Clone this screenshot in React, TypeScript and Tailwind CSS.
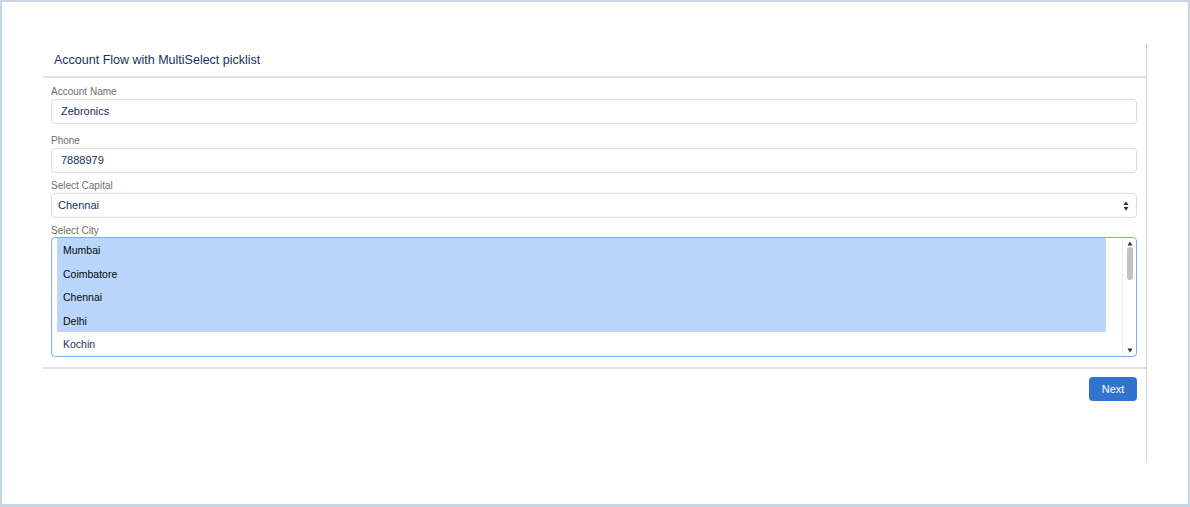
import { useState } from "react";

const cities = ["Mumbai", "Coimbatore", "Chennai", "Delhi", "Kochin"];

function Field({ label, value, className }: { label: string; value: string; className?: string }) {
  return (
    <div className={className}>
      <div className="h-[14px] text-[10px] leading-[14px] text-[#706e6b]">{label}</div>
      <div className="h-[25px] rounded-[4px] border border-[#dddbda] bg-white pl-[9px] text-[11px] leading-[23px] text-[#16325c]">
        {value}
      </div>
    </div>
  );
}

export default function App() {
  const [selected] = useState(["Mumbai", "Coimbatore", "Chennai", "Delhi"]);

  return (
    <div
      className="h-[507px] w-[1190px] overflow-hidden border-2 border-b-[3px] border-[#c8d5e4] bg-white"
      style={{ fontFamily: "'Liberation Sans', Arial, sans-serif" }}
    >
      <div className="ml-[41px] mt-[42px] flex h-[418px] w-[1104px] flex-col border-r border-[#d4d4d4]">
        {/* header */}
        <div className="h-[34px] border-b-2 border-[#e0e0e0] pl-[11px] text-[12.5px] leading-[32px] text-[#16325c]">
          Account Flow with MultiSelect picklist
        </div>

        {/* body */}
        <div className="pl-[8px] pr-[9px] pt-[7px]">
          <Field label="Account Name" value="Zebronics" />
          <Field label="Phone" value="7888979" className="mt-[10px]" />

          <div className="mt-[6px]">
            <div className="h-[14px] text-[10px] leading-[14px] text-[#706e6b]">Select Capital</div>
            <div className="flex h-[25px] items-center justify-between rounded-[4px] border border-[#dddbda] bg-white pl-[6px] pr-[6px] text-[11px] text-[#16325c]">
              <span>Chennai</span>
              <svg width="6" height="12" viewBox="0 0 6 12" className="mr-[1px]">
                <path d="M3 1.5 L5.5 5 H0.5 Z" fill="#16325c" />
                <path d="M3 10.5 L5.5 7 H0.5 Z" fill="#16325c" />
              </svg>
            </div>
          </div>

          <div className="mt-[6px]">
            <div className="h-[13px] text-[10px] leading-[13px] text-[#706e6b]">Select City</div>
            <div className="flex h-[120px] rounded-[4px] border border-[#78aef0] bg-white">
              <div className="flex-1 pl-[5px] pr-[16px]">
                {cities.map((c) => {
                  const on = selected.includes(c);
                  return (
                    <div
                      key={c}
                      className={`h-[23.5px] pl-[6px] pt-[1px] text-[10.5px] leading-[23px] ${
                        on ? "bg-[#bad6fa] text-[#080707]" : "text-[#16325c]"
                      }`}
                    >
                      {c}
                    </div>
                  );
                })}
              </div>
              <div className="flex w-[14px] flex-col items-center border-l border-[#ececec] py-[3px]">
                <svg width="6" height="5" viewBox="0 0 6 5">
                  <path d="M3 0.5 L5.5 4.5 H0.5 Z" fill="#333" />
                </svg>
                <div className="mt-[1px] h-[33px] w-[6px] rounded-full bg-[#c1c1c1]" />
                <div className="flex-1" />
                <svg width="6" height="5" viewBox="0 0 6 5">
                  <path d="M3 4.5 L5.5 0.5 H0.5 Z" fill="#333" />
                </svg>
              </div>
            </div>
          </div>
        </div>

        {/* footer */}
        <div className="mt-[10px] flex justify-end border-t-2 border-[#e0e0e0] pr-[9px] pt-[8px]">
          <button className="h-[24px] w-[48px] rounded-[4px] bg-[#3174d0] text-[11px] text-white">
            Next
          </button>
        </div>
      </div>
    </div>
  );
}
